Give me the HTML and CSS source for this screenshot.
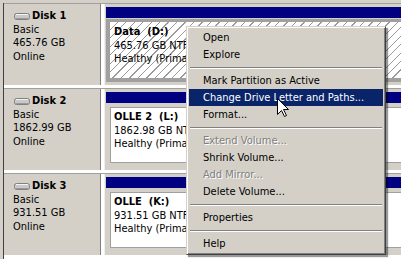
FILE: index.html
```html
<!DOCTYPE html>
<html>
<head>
<meta charset="utf-8">
<link rel="stylesheet" href="styles.css">
</head>
<body>
<div class="view">
  <div class="disks">
    <div class="disk">
      <div class="label">
        <div class="title"><svg class="hdd" width="16" height="7" viewBox="0 0 16 7"><rect x="0.5" y="0.5" width="15" height="6" rx="2" fill="#c8c8c8" stroke="#808080"/><rect x="2" y="1" width="12" height="1" fill="#f4f4f4"/><rect x="2" y="5" width="12" height="1" fill="#9a9a9a"/></svg><span>Disk 1</span></div>
        <div>Basic</div>
        <div>465.76 GB</div>
        <div>Online</div>
      </div>
      <div class="vols">
        <div class="bar"></div>
        <div class="vol sel">
          <div class="inner">
            <div class="vname">Data&nbsp; (D:)</div>
            <div>465.76 GB NTFS</div>
            <div>Healthy (Primary Partition)</div>
          </div>
        </div>
      </div>
    </div>
    <div class="disk">
      <div class="label">
        <div class="title"><svg class="hdd" width="16" height="7" viewBox="0 0 16 7"><rect x="0.5" y="0.5" width="15" height="6" rx="2" fill="#c8c8c8" stroke="#808080"/><rect x="2" y="1" width="12" height="1" fill="#f4f4f4"/><rect x="2" y="5" width="12" height="1" fill="#9a9a9a"/></svg><span>Disk 2</span></div>
        <div>Basic</div>
        <div>1862.99 GB</div>
        <div>Online</div>
      </div>
      <div class="vols">
        <div class="bar"></div>
        <div class="vol">
          <div class="inner">
            <div class="vname">OLLE 2&nbsp; (L:)</div>
            <div>1862.98 GB NTFS</div>
            <div>Healthy (Primary Partition)</div>
          </div>
        </div>
      </div>
    </div>
    <div class="disk">
      <div class="label">
        <div class="title"><svg class="hdd" width="16" height="7" viewBox="0 0 16 7"><rect x="0.5" y="0.5" width="15" height="6" rx="2" fill="#c8c8c8" stroke="#808080"/><rect x="2" y="1" width="12" height="1" fill="#f4f4f4"/><rect x="2" y="5" width="12" height="1" fill="#9a9a9a"/></svg><span>Disk 3</span></div>
        <div>Basic</div>
        <div>931.51 GB</div>
        <div>Online</div>
      </div>
      <div class="vols">
        <div class="bar"></div>
        <div class="vol">
          <div class="inner">
            <div class="vname">OLLE&nbsp; (K:)</div>
            <div>931.51 GB NTFS</div>
            <div>Healthy (Primary Partition)</div>
          </div>
        </div>
      </div>
    </div>
  </div>
</div>

<div class="menu">
  <div class="item">Open</div>
  <div class="item">Explore</div>
  <div class="sep"></div>
  <div class="item">Mark Partition as Active</div>
  <div class="item hot">Change Drive Letter and Paths...</div>
  <div class="item">Format...</div>
  <div class="sep"></div>
  <div class="item off">Extend Volume...</div>
  <div class="item">Shrink Volume...</div>
  <div class="item off">Add Mirror...</div>
  <div class="item">Delete Volume...</div>
  <div class="sep"></div>
  <div class="item">Properties</div>
  <div class="sep"></div>
  <div class="item">Help</div>
</div>

<svg class="cursor" width="13" height="20" viewBox="0 0 13 20"><path d="M0.5 0.5 L0.5 16.5 L4.5 12.5 L7.5 18.5 L9.5 17.5 L6.5 11.5 L11.5 11.5 Z" fill="#fff" stroke="#000" stroke-width="1" stroke-linejoin="miter"/></svg>
</body>
</html>
```

FILE: styles.css
```css
html, body {
  margin: 0;
  padding: 0;
}
body {
  width: 401px;
  height: 259px;
  overflow: hidden;
  background: #d4d0c8;
  font-family: "DejaVu Sans Condensed", "Liberation Sans", sans-serif;
  font-size: 11px;
  color: #000;
  position: relative;
}
.view {
  padding-left: 3px;
  padding-top: 3px;
  height: 256px;
}
.disks {
  border-left: 1px solid #404040;
  background: #fff;
  height: 256px;
}
.disk {
  display: flex;
  height: 81px;
  border-top: 1px solid #a0a0a0;
  margin-bottom: 3px;
  background: #fff;
}
.label {
  flex: none;
  width: 97px;
  box-sizing: border-box;
  background: #d4d0c8;
  border-right: 1px solid #808080;
  padding: 5px 0 0 9px;
  line-height: 13.5px;
}
.title {
  display: flex;
  align-items: center;
  font-weight: bold;
  margin-left: 1px;
}
.hdd {
  margin-right: 2px;
  margin-top: 1px;
}
.vols {
  flex: 1;
  margin-left: 3px;
  border-left: 1px solid #f0f0f0;
  background: #d4d0c8;
  padding: 3px 0 0 1px;
  overflow: hidden;
}
.bar {
  height: 11px;
  width: 400px;
  background: #000080;
}
.vol {
  width: 400px;
  height: 64px;
  box-sizing: border-box;
  padding: 4px;
  background: #d4d0c8;
}
.vol.sel {
  background: #a0a0a0;
  border-top: 1px solid #d4d0c8;
  padding-top: 3px;
}
.vol .inner {
  height: 56px;
  box-sizing: border-box;
  background: #fff;
  padding: 2px 0 0 3px;
  line-height: 13.5px;
  white-space: nowrap;
  border: 1px solid #a0a0a0;
}
.vol.sel .inner {
  border: none;
  padding: 3px 0 0 4px;
  background: repeating-linear-gradient(135deg, #fff 0 5px, #9a9a9a 5px 6px);
}
.vname {
  font-weight: bold;
}

.menu {
  position: absolute;
  left: 186px;
  top: 26px;
  width: 200px;
  box-sizing: border-box;
  background: #d4d0c8;
  border: 1px solid;
  border-color: #d4d0c8 #404040 #404040 #d4d0c8;
  box-shadow: inset 1px 1px 0 #fff, inset -1px -1px 0 #808080, 2px 2px 1px rgba(0,0,0,0.4);
  padding: 2px;
}
.item {
  height: 17px;
  line-height: 17px;
  padding-left: 14px;
  white-space: nowrap;
}
.item.hot {
  background: #0a246a;
  color: #fff;
}
.item.off {
  color: #808080;
  text-shadow: 1px 1px 0 #fff;
}
.sep {
  height: 9px;
  margin: 0 1px;
  box-sizing: border-box;
  border-top: 4px solid transparent;
}
.sep::after {
  content: "";
  display: block;
  height: 1px;
  background: #808080;
  border-bottom: 1px solid #fff;
}
.cursor {
  position: absolute;
  left: 277px;
  top: 98px;
}
```
